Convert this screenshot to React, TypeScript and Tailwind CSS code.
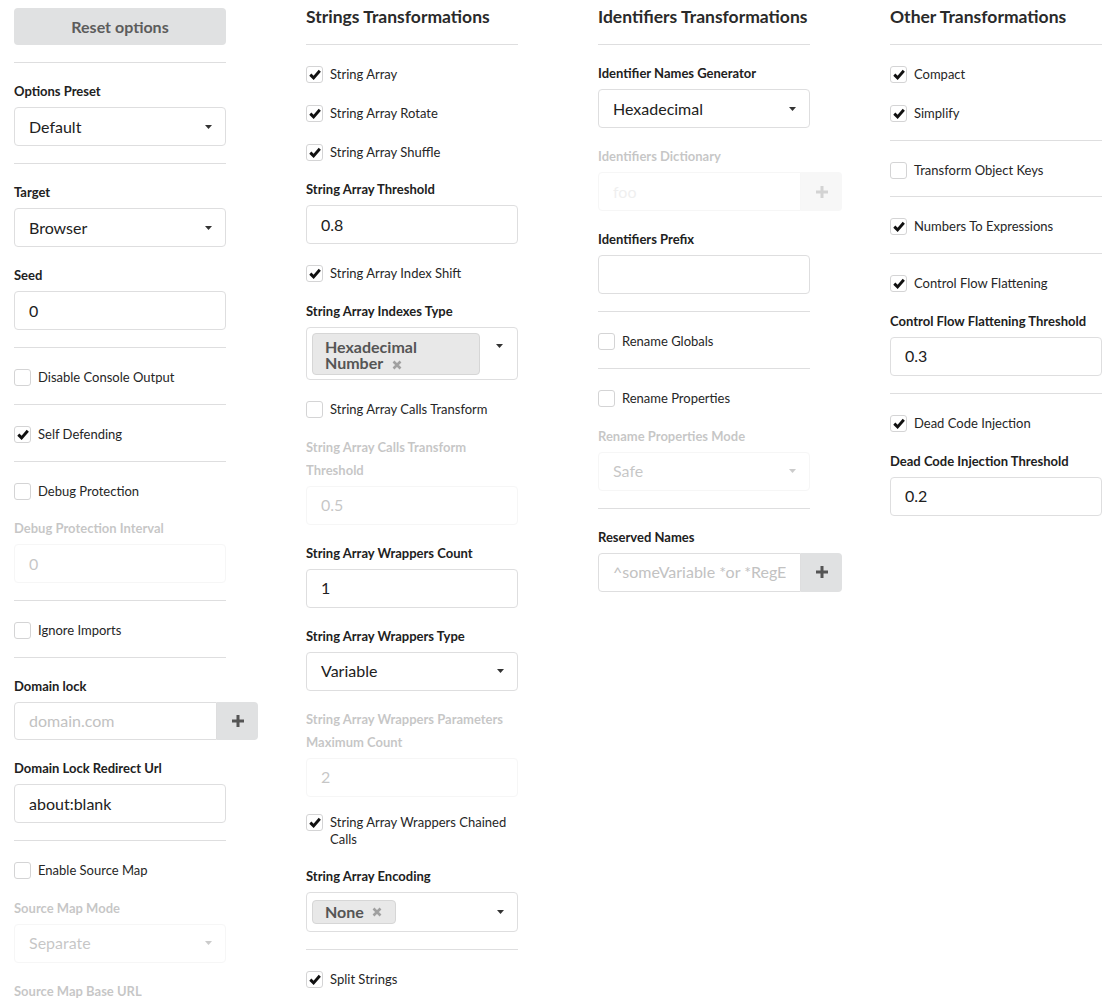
import React from "react";

const Divider = () => <div className="h-px bg-[#dededf]" />;

function Heading({ children }: { children: React.ReactNode }) {
  return (
    <h4 className="h-[20px] text-[17.5px] leading-[20px] font-bold text-[#2a2a2a]">
      {children}
    </h4>
  );
}

function CheckMark() {
  return (
    <svg width="12" height="11" viewBox="0 0 12 11">
      <path d="M1.3 5.6 L4.6 8.9 L10.8 1.8" fill="none" stroke="#111" strokeWidth="2.9" />
    </svg>
  );
}

function Check({
  label,
  checked = false,
  multi = false,
}: {
  label: string;
  checked?: boolean;
  multi?: boolean;
}) {
  return (
    <div className={`flex items-start gap-[7px] ${multi ? "" : "h-[21.75px] pt-[4px]"}`}>
      <span className="w-[17px] h-[17px] shrink-0 rounded-[3px] border border-[#d4d4d5] bg-white flex items-center justify-center">
        {checked && <CheckMark />}
      </span>
      <span className="text-[13px] leading-[17px] text-[#262626]">{label}</span>
    </div>
  );
}

function Field({
  label,
  disabled = false,
  children,
}: {
  label: string;
  disabled?: boolean;
  children: React.ReactNode;
}) {
  return (
    <div className={disabled ? "opacity-[0.25]" : ""}>
      <label className="block mb-[4px] text-[13px] leading-[23px] font-bold text-[#212121]">
        {label}
      </label>
      {children}
    </div>
  );
}

function Caret() {
  return (
    <svg width="7" height="4" viewBox="0 0 7 4">
      <polygon points="0,0 7,0 3.5,4" fill="#333" />
    </svg>
  );
}

function Input({ value = "" }: { value?: string }) {
  return (
    <div className="h-[39px] rounded-[4px] border border-[#dededf] bg-white px-[14px] flex items-center text-[16px] text-[#212121]">
      {value}
    </div>
  );
}

function Select({ value }: { value: string }) {
  return (
    <div className="h-[39px] rounded-[4px] border border-[#dededf] bg-white pl-[14px] pr-[13px] flex items-center justify-between text-[16px] text-[#212121]">
      <span>{value}</span>
      <Caret />
    </div>
  );
}

function Cross() {
  return (
    <svg width="10" height="10" viewBox="0 0 10 10" className="inline-block">
      <path d="M1.5 1.5 L8.5 8.5 M8.5 1.5 L1.5 8.5" stroke="#a0a0a0" strokeWidth="2.6" />
    </svg>
  );
}

function Plus({ color = "#555" }: { color?: string }) {
  return (
    <svg width="12" height="12" viewBox="0 0 12 12">
      <rect x="4.5" y="0" width="3" height="12" fill={color} />
      <rect x="0" y="4.5" width="12" height="3" fill={color} />
    </svg>
  );
}

function ActionInput({ placeholder, h = "h-[38px]" }: { placeholder: string; h?: string }) {
  return (
    <div className={`flex w-[244px] ${h}`}>
      <div className="flex-1 min-w-0 rounded-l-[4px] border border-[#dededf] bg-white px-[14px] flex items-center text-[16px] text-[#c2c2c2]">
        <span className="block overflow-hidden whitespace-nowrap">{placeholder}</span>
      </div>
      <div className="w-[41px] shrink-0 rounded-r-[4px] bg-[#e0e1e2] flex items-center justify-center">
        <Plus />
      </div>
    </div>
  );
}

export default function App() {
  return (
    <div className="h-[1004px] overflow-hidden bg-white font-['Lato',sans-serif]">
      <div className="grid grid-cols-[212px_212px_212px_212px] gap-x-[80px] pl-[14px] items-start">
        {/* column 1 */}
        <div className="flex flex-col gap-[17px] pt-[8px]">
          <button className="h-[37px] rounded-[4px] bg-[#e0e1e2] text-[16px] font-bold text-[#5c5c5c]">
            Reset options
          </button>
          <Divider />
          <Field label="Options Preset">
            <Select value="Default" />
          </Field>
          <Divider />
          <Field label="Target">
            <Select value="Browser" />
          </Field>
          <Field label="Seed">
            <Input value="0" />
          </Field>
          <Divider />
          <Check label="Disable Console Output" />
          <Divider />
          <Check label="Self Defending" checked />
          <Divider />
          <Check label="Debug Protection" />
          <Field label="Debug Protection Interval" disabled>
            <Input value="0" />
          </Field>
          <Divider />
          <Check label="Ignore Imports" />
          <Divider />
          <Field label="Domain lock">
            <ActionInput placeholder="domain.com" />
          </Field>
          <Field label="Domain Lock Redirect Url">
            <Input value="about:blank" />
          </Field>
          <Divider />
          <Check label="Enable Source Map" />
          <Field label="Source Map Mode" disabled>
            <Select value="Separate" />
          </Field>
          <Field label="Source Map Base URL" disabled>
            <Input value="" />
          </Field>
        </div>

        {/* column 2 */}
        <div className="flex flex-col gap-[17px] pt-[7px]">
          <Heading>Strings Transformations</Heading>
          <Divider />
          <Check label="String Array" checked />
          <Check label="String Array Rotate" checked />
          <Check label="String Array Shuffle" checked />
          <Field label="String Array Threshold">
            <Input value="0.8" />
          </Field>
          <Check label="String Array Index Shift" checked />
          <Field label="String Array Indexes Type">
            <div className="relative h-[53px] rounded-[4px] border border-[#dededf] bg-white pl-[5px] pt-[5px]">
              <div className="w-[168px] rounded-[4px] border border-[#d6d6d6] bg-[#e8e8e8] pl-[12px] pt-[5px] pb-[3px] text-[16px] leading-[16px] font-bold text-[#555]">
                Hexadecimal
                <br />
                Number <span className="ml-[5px]"><Cross /></span>
              </div>
              <div className="absolute right-[14px] top-[16px] flex">
                <Caret />
              </div>
            </div>
          </Field>
          <Check label="String Array Calls Transform" />
          <Field label="String Array Calls Transform Threshold" disabled>
            <Input value="0.5" />
          </Field>
          <Field label="String Array Wrappers Count">
            <Input value="1" />
          </Field>
          <Field label="String Array Wrappers Type">
            <Select value="Variable" />
          </Field>
          <Field label="String Array Wrappers Parameters Maximum Count" disabled>
            <Input value="2" />
          </Field>
          <Check label="String Array Wrappers Chained Calls" checked multi />
          <Field label="String Array Encoding">
            <div className="h-[40px] rounded-[4px] border border-[#dededf] bg-white pl-[5px] pr-[13px] flex items-center justify-between">
              <div className="h-[24px] rounded-[4px] border border-[#d6d6d6] bg-[#e8e8e8] pl-[12px] pr-[13px] flex items-center text-[16px] font-bold text-[#555]">
                None <span className="ml-[8px] flex"><Cross /></span>
              </div>
              <Caret />
            </div>
          </Field>
          <Divider />
          <Check label="Split Strings" checked />
        </div>

        {/* column 3 */}
        <div className="flex flex-col gap-[17px] pt-[7px]">
          <Heading>Identifiers Transformations</Heading>
          <Divider />
          <Field label="Identifier Names Generator">
            <Select value="Hexadecimal" />
          </Field>
          <Field label="Identifiers Dictionary" disabled>
            <ActionInput placeholder="foo" h="h-[39px]" />
          </Field>
          <Field label="Identifiers Prefix">
            <Input value="" />
          </Field>
          <Divider />
          <Check label="Rename Globals" />
          <Divider />
          <Check label="Rename Properties" />
          <Field label="Rename Properties Mode" disabled>
            <Select value="Safe" />
          </Field>
          <Divider />
          <Field label="Reserved Names">
            <ActionInput placeholder="^someVariable *or *RegExp*" h="h-[39px]" />
          </Field>
        </div>

        {/* column 4 */}
        <div className="flex flex-col gap-[17px] pt-[7px]">
          <Heading>Other Transformations</Heading>
          <Divider />
          <Check label="Compact" checked />
          <Check label="Simplify" checked />
          <Divider />
          <Check label="Transform Object Keys" />
          <Divider />
          <Check label="Numbers To Expressions" checked />
          <Divider />
          <Check label="Control Flow Flattening" checked />
          <Field label="Control Flow Flattening Threshold">
            <Input value="0.3" />
          </Field>
          <Divider />
          <Check label="Dead Code Injection" checked />
          <Field label="Dead Code Injection Threshold">
            <Input value="0.2" />
          </Field>
        </div>
      </div>
    </div>
  );
}
